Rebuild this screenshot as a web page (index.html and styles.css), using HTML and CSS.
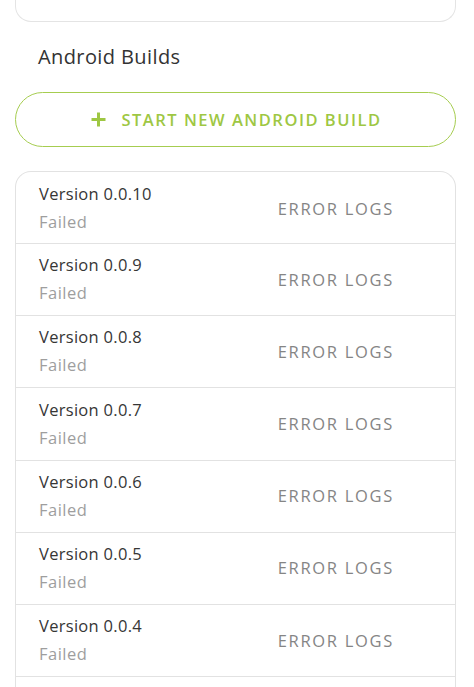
FILE: index.html
```html
<!DOCTYPE html>
<html lang="en">
<head>
<meta charset="utf-8">
<title>Android Builds</title>
<link rel="stylesheet" href="styles.css">
</head>
<body>
<main class="page">
  <div class="top-card"></div>
  <h2 class="section-title">Android Builds</h2>
  <button class="start-btn" type="button">
    <svg class="plus" viewBox="0 0 15 15" width="15" height="15" aria-hidden="true">
      <path d="M7.5 0.5v14M0.5 7.5h14" stroke="currentColor" stroke-width="3" fill="none"/>
    </svg>
    <span>START NEW ANDROID BUILD</span>
  </button>
  <ul class="builds">
    <li class="build"><div class="info"><span class="version">Version 0.0.10</span><span class="status">Failed</span></div><a class="logs">ERROR LOGS</a></li>
    <li class="build"><div class="info"><span class="version">Version 0.0.9</span><span class="status">Failed</span></div><a class="logs">ERROR LOGS</a></li>
    <li class="build"><div class="info"><span class="version">Version 0.0.8</span><span class="status">Failed</span></div><a class="logs">ERROR LOGS</a></li>
    <li class="build"><div class="info"><span class="version">Version 0.0.7</span><span class="status">Failed</span></div><a class="logs">ERROR LOGS</a></li>
    <li class="build"><div class="info"><span class="version">Version 0.0.6</span><span class="status">Failed</span></div><a class="logs">ERROR LOGS</a></li>
    <li class="build"><div class="info"><span class="version">Version 0.0.5</span><span class="status">Failed</span></div><a class="logs">ERROR LOGS</a></li>
    <li class="build"><div class="info"><span class="version">Version 0.0.4</span><span class="status">Failed</span></div><a class="logs">ERROR LOGS</a></li>
    <li class="build build-partial"></li>
  </ul>
</main>
</body>
</html>
```

FILE: styles.css
```css
html, body {
  margin: 0;
  padding: 0;
  background: #ffffff;
  height: 687px;
  overflow: hidden;
}

body {
  font-family: "Open Sans", "Liberation Sans", sans-serif;
  color: #333333;
}

.page {
  padding: 0 18px 0 15px;
  display: flex;
  flex-direction: column;
}

.top-card {
  height: 21px;
  border: 1px solid #e4e4e4;
  border-top: none;
  border-radius: 0 0 16px 16px;
  background: #ffffff;
}

.section-title {
  margin: 21px 0 0 0;
  padding-left: 23px;
  font-size: 20px;
  line-height: 28px;
  font-weight: 400;
  letter-spacing: 0.4px;
  color: #333333;
}

.start-btn {
  margin-top: 21px;
  height: 55px;
  border: 1.5px solid #a6cd50;
  border-radius: 28px;
  background: #ffffff;
  color: #9ec743;
  display: flex;
  align-items: center;
  justify-content: center;
  gap: 15px;
  font-family: inherit;
  font-size: 16.5px;
  font-weight: 600;
  letter-spacing: 1.5px;
  padding: 0 0 0 2px;
}

.plus {
  display: block;
  flex: none;
}

.builds {
  list-style: none;
  margin: 24px 0 0 0;
  padding: 0;
  border: 1px solid #e2e2e2;
  border-radius: 16px 16px 0 0;
  border-bottom: none;
}

.build {
  display: flex;
  align-items: center;
  justify-content: space-between;
  padding: 7.2px 61px 8px 23px;
  border-bottom: 1px solid #e2e2e2;
  height: 56px;
  box-sizing: content-box;
}

.build:first-child {
  padding-top: 8px;
  padding-bottom: 7px;
}

.build-partial {
  border-bottom: none;
}

.info {
  display: flex;
  flex-direction: column;
}

.version {
  font-size: 16.5px;
  line-height: 28px;
  letter-spacing: 0.3px;
  color: #363636;
}

.status {
  font-size: 16.5px;
  line-height: 28px;
  letter-spacing: 0.5px;
  color: #9e9e9e;
}

.logs {
  font-size: 16.5px;
  font-weight: 500;
  letter-spacing: 1.7px;
  color: #858585;
  cursor: pointer;
}
```
